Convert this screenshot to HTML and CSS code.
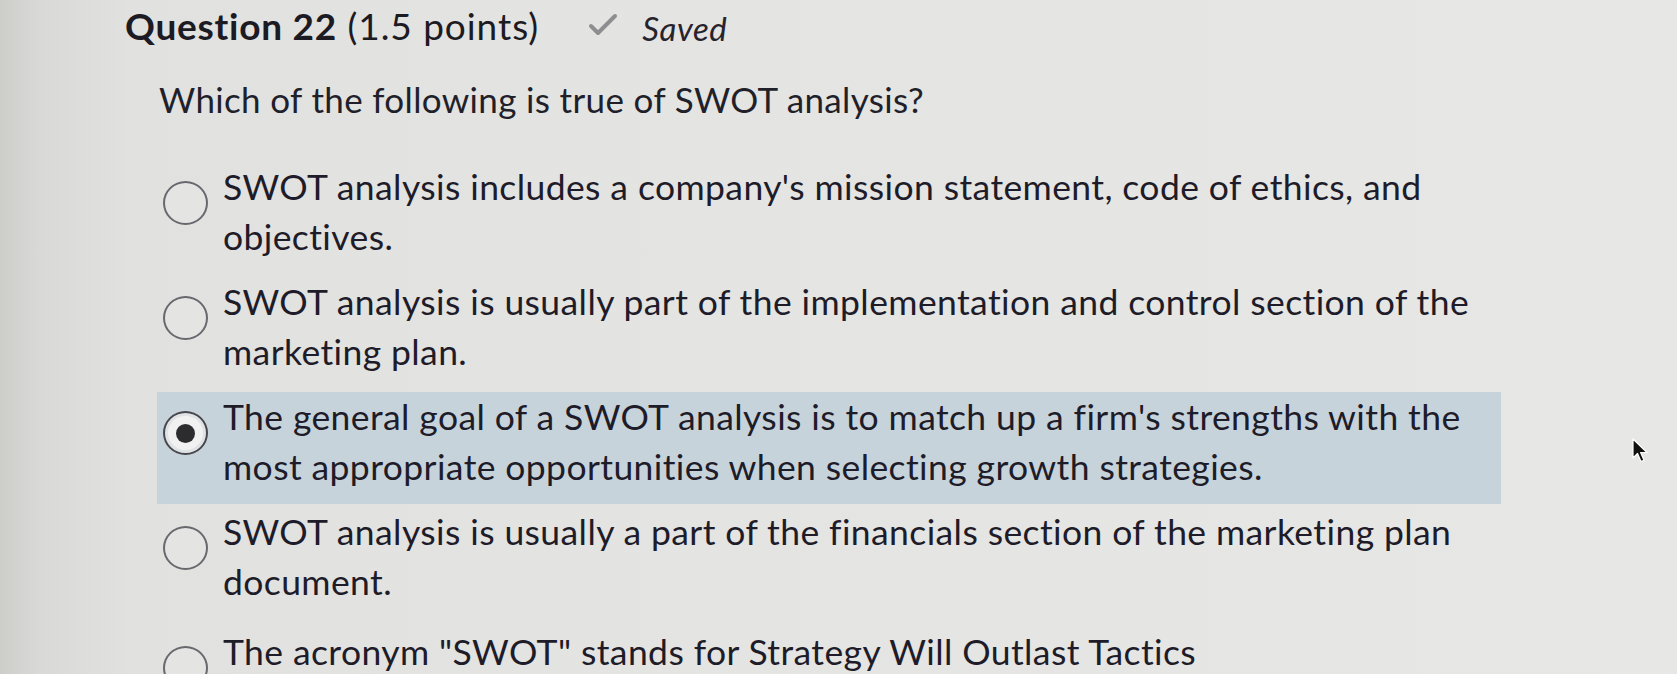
FILE: index.html
```html
<!DOCTYPE html>
<html lang="en">
<head>
<meta charset="utf-8">
<title>Question 22</title>
<link rel="stylesheet" href="styles.css">
</head>
<body>
<main class="page">
  <header class="header">
    <h1 class="title"><strong>Question 22</strong> (1.5 points)</h1>
    <svg class="check" width="30" height="24" viewBox="0 0 30 24" aria-hidden="true">
      <polyline points="3,13 10,20 27,3" fill="none" stroke="#8e8e90" stroke-width="4" stroke-linecap="round" stroke-linejoin="round"/>
    </svg>
    <span class="saved">Saved</span>
  </header>

  <p class="question">Which of the following is true of SWOT analysis?</p>

  <div class="options">
    <label class="option">
      <span class="radio"></span>
      <span class="text">SWOT analysis includes a company's mission statement, code of ethics, and objectives.</span>
    </label>
    <label class="option">
      <span class="radio"></span>
      <span class="text">SWOT analysis is usually part of the implementation and control section of the marketing plan.</span>
    </label>
    <label class="option selected">
      <span class="radio"><span class="dot"></span></span>
      <span class="text">The general goal of a SWOT analysis is to match up a firm's strengths with the most appropriate opportunities when selecting growth strategies.</span>
    </label>
    <label class="option">
      <span class="radio"></span>
      <span class="text">SWOT analysis is usually a part of the financials section of the marketing plan document.</span>
    </label>
    <label class="option last">
      <span class="radio"></span>
      <span class="text">The acronym "SWOT" stands for Strategy Will Outlast Tactics</span>
    </label>
  </div>

  <svg class="cursor" width="18" height="26" viewBox="0 0 18 26" aria-hidden="true">
    <path d="M1 1 L1 20 L5.5 15.5 L9 23.5 L12 22.2 L8.6 14.5 L15 14.5 Z" fill="#111" stroke="#fff" stroke-width="1.2" stroke-linejoin="round"/>
  </svg>
</main>
</body>
</html>
```

FILE: styles.css
```css
html, body {
  margin: 0;
  padding: 0;
}

body {
  width: 1677px;
  height: 674px;
  overflow: hidden;
  font-family: Lato, "Open Sans", "Liberation Sans", sans-serif;
  font-variant-ligatures: none;
  color: #1e1c29;
  background: linear-gradient(90deg, #cdcdca 0px, #d9d9d7 40px, #e1e1df 130px, #e4e4e2 700px, #e7e7e5 1677px);
}

.page {
  position: relative;
  height: 674px;
  padding-left: 125px;
  box-sizing: border-box;
}

.header {
  display: flex;
  align-items: center;
  height: 46px;
  padding-top: 3px;
}

.title {
  margin: 0;
  font-size: 37px;
  line-height: 44px;
  font-weight: 400;
  color: #1c1a23;
  letter-spacing: 0.95px;
}

.title strong {
  font-weight: 700;
  letter-spacing: 0.75px;
}

.check {
  margin-left: 49px;
  margin-top: -2px;
}

.saved {
  margin-left: 24px;
  font-size: 33px;
  font-style: italic;
  color: #27232d;
  margin-top: 3px;
  letter-spacing: 0.6px;
}

.question {
  margin: 28px 0 0 34px;
  font-size: 35px;
  line-height: 44px;
  color: #211f2a;
  letter-spacing: 0.35px;
}

.options {
  margin: 41px 0 0 32px;
  width: 1344px;
}

.option {
  display: flex;
  align-items: flex-start;
  padding: 0 20px 12px 6px;
  margin-bottom: 3px;
  font-size: 35.5px;
  line-height: 50px;
  letter-spacing: 0.4px;
}

.option.last {
  margin-top: 8px;
}

.option.selected {
  background: #c7d3db;
}

.radio {
  flex: none;
  width: 45px;
  height: 44px;
  box-sizing: border-box;
  margin-top: 19px;
  margin-right: 15px;
  border: 2.5px solid #68686e;
  border-radius: 50%;
  background: #e4e4e3;
  display: flex;
  align-items: center;
  justify-content: center;
}

.selected .radio {
  border-color: #47474d;
  background: #f1f1f1;
  box-shadow: inset 0 0 0 3px #dfe3e6;
}

.dot {
  width: 19px;
  height: 19px;
  border-radius: 50%;
  background: #2c2c2f;
}

.text {
  flex: 1;
}

.cursor {
  position: absolute;
  left: 1632px;
  top: 438px;
}
```
